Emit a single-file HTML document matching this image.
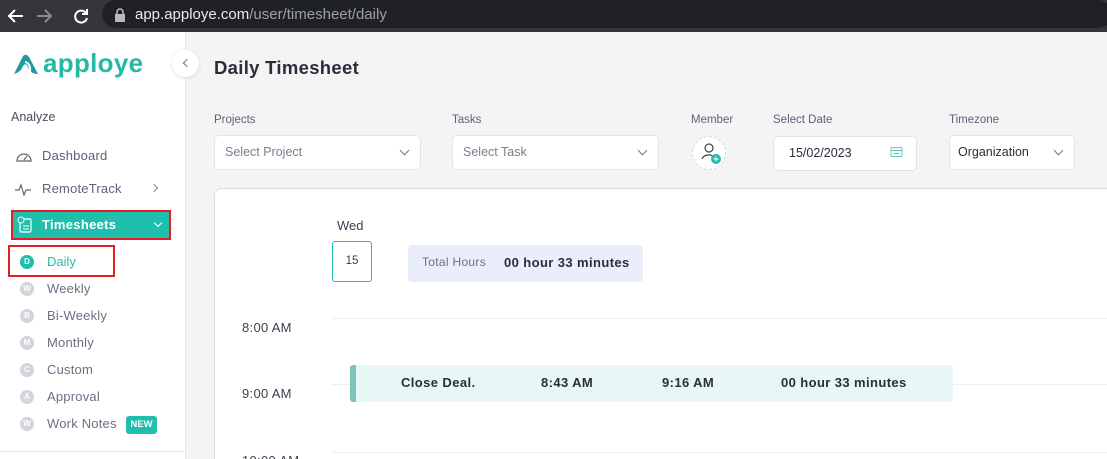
<!DOCTYPE html>
<html><head><meta charset="utf-8"><style>
*{margin:0;padding:0;box-sizing:border-box}
html,body{width:1107px;height:459px;overflow:hidden}
body{font-family:"Liberation Sans","DejaVu Sans",sans-serif;background:#f4f4f5;position:relative;color:#2b2d3a}
.abs{position:absolute}
.bar{left:0;top:0;width:1107px;height:32px;background:#35363a}
.url{left:102px;top:0;width:1010px;height:28px;background:#202124;border-radius:14px}
.side{left:0;top:32px;width:186px;height:427px;background:#fff;border-right:1px solid #e6e7eb}
.nav{font-size:13px;color:#5d6279;letter-spacing:0.2px}
.sub{font-size:13px;color:#6b7080;letter-spacing:0.2px}
.dot{width:14px;height:14px;border-radius:50%;background:#d3d5dc;color:#fff;font-size:8px;font-weight:bold;text-align:center;line-height:14px}
.lbl{font-size:11.5px;color:#5d6279}
.inp{background:#fff;border:1px solid #e3e4e8;border-radius:5px;height:35px;font-size:12.5px;color:#7b7f8e;padding:0 10px;line-height:33px}
.chev{position:absolute;right:12px;top:11px;width:7px;height:7px;border-right:1.3px solid #777;border-bottom:1.3px solid #777;transform:rotate(45deg)}
.hr{height:1px;background:#eceef1}
.tm{font-size:13px;color:#3b3f4e;letter-spacing:0.3px}
.b{font-size:13px;font-weight:bold;color:#2b2d3a;letter-spacing:0.4px}
</style></head><body>
<div class="abs bar"></div>
<div class="abs url"></div>
<svg class="abs" style="left:6px;top:6px" width="90" height="20"><g stroke="#fff" stroke-width="2" fill="none"><path d="M17 10H3M9 4L3 10l6 6"/></g><g stroke="#8a8b8e" stroke-width="2" fill="none"><path d="M31 10h14M39 4l6 6-6 6"/></g><g stroke="#fff" stroke-width="2" fill="none"><path d="M80 7a6 6 0 1 0 1 5"/><path d="M81 3v5h-5" /></g></svg>
<svg class="abs" style="left:114px;top:8px" width="12" height="14"><rect x="1" y="6" width="10" height="8" fill="#b5b7ba"/><path d="M3 6V4a3 3 0 0 1 6 0v2" stroke="#b5b7ba" stroke-width="1.6" fill="none"/></svg>
<div class="abs" style="left:135px;top:6px;font-size:15px;color:#e8eaed">app.apploye.com<span style="color:#9aa0a6">/user/timesheet/daily</span></div>

<div class="abs side"></div>
<svg class="abs" style="left:12px;top:54px" width="28" height="22"><path d="M2 20 L11 2 Q14 -1 17 3 L26 20 Q18 20 16 13 Q14 8 11 12 Q9 18 2 20Z" fill="#1f9aa0"/><path d="M13 8 Q19 9 18 19" stroke="#fff" stroke-width="2" fill="none"/></svg>
<div class="abs" style="left:43px;top:48px;font-size:26px;font-weight:bold;color:#25b8a7;letter-spacing:0.3px">apploye</div>
<div class="abs" style="left:172px;top:50px;width:27px;height:27px;border-radius:50%;background:#fff;box-shadow:0 1px 4px rgba(0,0,0,.12)"></div>
<div class="abs" style="left:184px;top:60px;width:6px;height:6px;border-left:1.3px solid #777;border-bottom:1.3px solid #777;transform:rotate(45deg)"></div>
<div class="abs" style="left:11px;top:110px;font-size:12.5px;color:#4a4e5c">Analyze</div>
<svg class="abs" style="left:15px;top:149px" width="18" height="14"><path d="M2 12a7 7 0 1 1 14 0z" stroke="#666" stroke-width="1.2" fill="none"/><path d="M9 11l3-4" stroke="#666" stroke-width="1.2"/></svg>
<div class="abs nav" style="left:42px;top:148px">Dashboard</div>
<svg class="abs" style="left:15px;top:182px" width="18" height="14"><path d="M0 8h4l2-5 3 10 2-5h5" stroke="#666" stroke-width="1.2" fill="none"/></svg>
<div class="abs nav" style="left:42px;top:181px">RemoteTrack</div>
<div class="abs" style="left:151px;top:185px;width:6px;height:6px;border-right:1.3px solid #888;border-top:1.3px solid #888;transform:rotate(45deg)"></div>
<div class="abs" style="left:11px;top:210px;width:160px;height:30px;background:#20bfad;border:2px solid #e31e24"></div>
<svg class="abs" style="left:17px;top:216px" width="16" height="18"><rect x="3" y="3" width="11" height="13" rx="1.5" stroke="#fff" stroke-width="1.2" fill="none"/><circle cx="4" cy="4" r="3" stroke="#fff" fill="#20bfad"/><path d="M6 10h6M6 13h6" stroke="#fff"/></svg>
<div class="abs" style="left:42px;top:217px;font-size:13px;font-weight:bold;color:#fff;letter-spacing:0.3px">Timesheets</div>
<div class="abs" style="left:155px;top:220px;width:6px;height:6px;border-right:1.3px solid #fff;border-bottom:1.3px solid #fff;transform:rotate(45deg)"></div>
<div class="abs" style="left:8px;top:245px;width:107px;height:32px;border:2px solid #e31e24"></div>
<div class="abs dot" style="left:20px;top:255px;background:#20bfad">D</div>
<div class="abs" style="left:47px;top:254px;font-size:13px;color:#20bfad">Daily</div>
<div class="abs dot" style="left:20px;top:282px">W</div><div class="abs sub" style="left:47px;top:281px">Weekly</div>
<div class="abs dot" style="left:20px;top:309px">B</div><div class="abs sub" style="left:47px;top:308px">Bi-Weekly</div>
<div class="abs dot" style="left:20px;top:336px">M</div><div class="abs sub" style="left:47px;top:335px">Monthly</div>
<div class="abs dot" style="left:20px;top:363px">C</div><div class="abs sub" style="left:47px;top:362px">Custom</div>
<div class="abs dot" style="left:20px;top:390px">A</div><div class="abs sub" style="left:47px;top:389px">Approval</div>
<div class="abs dot" style="left:20px;top:417px">W</div><div class="abs sub" style="left:47px;top:416px">Work Notes</div>
<div class="abs" style="left:126px;top:416px;width:31px;height:18px;border-radius:3px;background:#20bfad;color:#fff;font-size:9.5px;font-weight:bold;text-align:center;line-height:18px">NEW</div>
<div class="abs" style="left:0;top:451px;width:186px;height:1px;background:#e6e7eb"></div>

<div class="abs" style="left:214px;top:57px;font-size:18.5px;font-weight:bold;color:#2b2d3a;letter-spacing:0.3px">Daily Timesheet</div>
<div class="abs lbl" style="left:214px;top:114px">Projects</div>
<div class="abs inp" style="left:214px;top:135px;width:207px">Select Project<div class="chev"></div></div>
<div class="abs lbl" style="left:452px;top:114px">Tasks</div>
<div class="abs inp" style="left:452px;top:135px;width:207px">Select Task<div class="chev"></div></div>
<div class="abs lbl" style="left:691px;top:114px">Member</div>
<div class="abs" style="left:692px;top:136px;width:34px;height:34px;border-radius:50%;background:#fff;border:1px dashed #d5d7dd"></div>
<svg class="abs" style="left:700px;top:142px" width="22" height="22"><circle cx="9" cy="6" r="4" stroke="#444" fill="none" stroke-width="1.2"/><path d="M2 17a7 6 0 0 1 12 -2" stroke="#444" fill="none" stroke-width="1.2"/><circle cx="16" cy="17" r="5" fill="#20bfad"/><path d="M16 14.5v5M13.5 17h5" stroke="#fff"/></svg>
<div class="abs lbl" style="left:773px;top:114px">Select Date</div>
<div class="abs inp" style="left:773px;top:136px;width:144px;color:#2b2d3a;padding-left:15px">15/02/2023</div>
<svg class="abs" style="left:890px;top:146px" width="13" height="12"><rect x="1" y="1.5" width="11" height="9" rx="1" stroke="#5cc8bc" fill="none"/><path d="M1 4.5h11M3.5 7.5h6" stroke="#5cc8bc"/></svg>
<div class="abs lbl" style="left:949px;top:114px">Timezone</div>
<div class="abs inp" style="left:949px;top:135px;width:126px;color:#2b2d3a;padding-left:8px">Organization<div class="chev"></div></div>

<div class="abs" style="left:214px;top:188px;width:900px;height:280px;background:#fff;border:1px solid #d9dbe2;border-radius:8px"></div>
<div class="abs" style="left:337px;top:218px;font-size:13px;color:#3b3f4e">Wed</div>
<div class="abs" style="left:332px;top:241px;width:40px;height:41px;border:1px solid #20bfad;border-radius:3px;font-size:11.5px;text-align:center;line-height:39px;color:#3b3f4e">15</div>
<div class="abs" style="left:408px;top:245px;width:235px;height:37px;background:#eaeefa;border-radius:4px"></div>
<div class="abs" style="left:422px;top:255px;font-size:12px;color:#6b7080;letter-spacing:0.3px">Total Hours</div>
<div class="abs b" style="left:504px;top:255px">00 hour 33 minutes</div>
<div class="abs hr" style="left:332px;top:318px;width:775px"></div>
<div class="abs hr" style="left:332px;top:384px;width:775px"></div>
<div class="abs hr" style="left:332px;top:452px;width:775px"></div>
<div class="abs tm" style="left:242px;top:320px">8:00 AM</div>
<div class="abs tm" style="left:242px;top:386px">9:00 AM</div>
<div class="abs tm" style="left:242px;top:453px">10:00 AM</div>
<div class="abs" style="left:350px;top:365px;width:603px;height:37px;background:#e8f7f5;border-left:6px solid #7fc4bb;border-radius:3px"></div>
<div class="abs b" style="left:401px;top:375px">Close Deal.</div>
<div class="abs b" style="left:541px;top:375px">8:43 AM</div>
<div class="abs b" style="left:662px;top:375px">9:16 AM</div>
<div class="abs b" style="left:781px;top:375px">00 hour 33 minutes</div>
</body></html>
